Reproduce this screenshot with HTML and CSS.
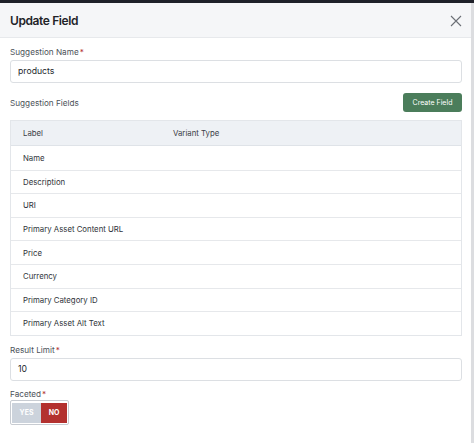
FILE: index.html
```html
<!DOCTYPE html>
<html>
<head>
<meta charset="utf-8">
<link rel="stylesheet" href="styles.css">
</head>
<body>
<div class="topbar"></div>
<div class="page">
  <div class="modal">
    <div class="modal-header">
      <h1 class="title">Update Field</h1>
      <button class="close" aria-label="Close">
        <svg width="12" height="12" viewBox="0 0 12 12"><path d="M1 1 L11 11 M11 1 L1 11" stroke="#6b6f76" stroke-width="1.1" fill="none"/></svg>
      </button>
    </div>
    <div class="modal-body">
      <label class="label">Suggestion Name<span class="req">*</span></label>
      <div class="input">products</div>

      <div class="fields-row">
        <span class="label plain">Suggestion Fields</span>
        <button class="btn-create">Create Field</button>
      </div>

      <div class="table">
        <div class="tr th"><div>Label</div><div>Variant Type</div></div>
        <div class="tr"><div>Name</div><div></div></div>
        <div class="tr"><div>Description</div><div></div></div>
        <div class="tr"><div>URI</div><div></div></div>
        <div class="tr"><div>Primary Asset Content URL</div><div></div></div>
        <div class="tr"><div>Price</div><div></div></div>
        <div class="tr"><div>Currency</div><div></div></div>
        <div class="tr"><div>Primary Category ID</div><div></div></div>
        <div class="tr"><div>Primary Asset Alt Text</div><div></div></div>
      </div>

      <label class="label gap">Result Limit<span class="req">*</span></label>
      <div class="input">10</div>

      <label class="label gap2">Faceted<span class="req">*</span></label>
      <div class="toggle">
        <span class="yes">YES</span><span class="no">NO</span>
      </div>
    </div>
  </div>
  <div class="strip"></div>
</div>
</body>
</html>
```
FILE: styles.css
```css
* { box-sizing: border-box; }
html, body { margin: 0; padding: 0; background: #fff; }
body {
  font-family: Inter, "Noto Sans", "Liberation Sans", sans-serif;
  color: #24282d;
  width: 474px;
  height: 443px;
  overflow: hidden;
}
.topbar { height: 3px; background: #1f2129; }
.page { display: flex; height: 440px; }
.modal { flex: 1; display: flex; flex-direction: column; }
.strip { width: 3px; background: #dcdde0; }

.modal-header {
  height: 35px;
  background: #f5f6f8;
  border-bottom: 1px solid #e7e9ec;
  display: flex;
  align-items: center;
  justify-content: space-between;
  padding: 0 9px 0 10px;
}
.title { margin: 0; font-size: 12px; font-weight: 600; color: #1f2328; letter-spacing: -0.4px; }
.close { border: 0; background: none; padding: 0; display: flex; width: 12px; height: 12px; margin-top: 1px; }

.modal-body { padding: 8px 9px 0 10px; display: flex; flex-direction: column; }
.label { display: block; font-size: 8.2px; line-height: 12px; color: #4c5259; margin-bottom: 2px; }
.label.plain { margin: 0; }
.label.gap { margin-top: 8px; }
.label.gap2 { margin-top: 7px; margin-bottom: 0; }
.req { color: #b3312f; margin-left: 1px; }

.input {
  height: 23px;
  border: 1px solid #dcdfe3;
  border-radius: 3px;
  font-size: 8.7px;
  line-height: 21px;
  padding-left: 7px;
  color: #24282d;
}

.fields-row { display: flex; justify-content: space-between; align-items: center; margin-top: 10px; height: 19px; }
.btn-create {
  height: 19px;
  width: 59px;
  padding: 0;
  border: 0;
  border-radius: 3px;
  background: #4b7d5b;
  color: #fff;
  font-family: inherit;
  font-size: 7px;
}

.table { margin-top: 8px; border: 1px solid #e3e6ea; }
.tr {
  display: grid;
  grid-template-columns: 150px 1fr;
  height: 23.6px;
  align-items: center;
  border-top: 1px solid #e6e8eb;
  font-size: 7.8px;
  color: #2f343a;
  padding-left: 12px;
}
.tr.th { height: 25px; border-top: 0; background: #eef1f5; color: #3b4047; border-bottom: 1px solid #dfe3e8; }
.tr.th + .tr { border-top: 0; }

.toggle {
  display: flex;
  width: 59px;
  height: 25px;
  border: 1px solid #c8ccd2;
  border-radius: 2px;
  padding: 2px 1px 1px;
}
.toggle span {
  display: flex; align-items: center; justify-content: center;
  font-size: 7px; font-weight: 700; color: #fff;
}
.yes { width: 29px; background: #ccd3dc; }
.no { width: 26px; background: #b3312f; }
```
